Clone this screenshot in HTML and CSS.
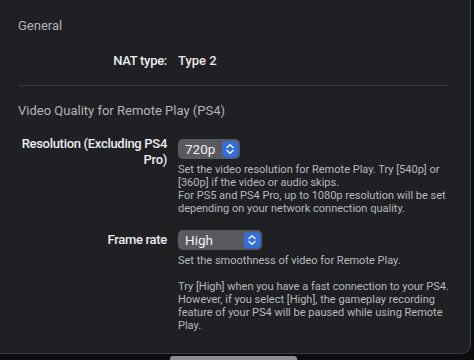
FILE: index.html
```html
<!DOCTYPE html>
<html>
<head>
<meta charset="utf-8">
<link rel="stylesheet" href="styles.css">
</head>
<body>
<div class="screen">
  <div class="panel">
    <div class="section-title first">General</div>
    <div class="row nat">
      <div class="label">NAT type:</div>
      <div class="value">Type 2</div>
    </div>
    <div class="divider"></div>
    <div class="section-title">Video Quality for Remote Play (PS4)</div>
    <div class="row res">
      <div class="label">Resolution (Excluding PS4 Pro)</div>
      <div class="value">
        <div class="popup popup-res"><span>720p</span><span class="stepper"><svg width="10" height="12" viewBox="0 0 10 12"><path d="M2 4.5 L5 1.8 L8 4.5 M2 7.5 L5 10.2 L8 7.5" fill="none" stroke="#fff" stroke-width="1.5" stroke-linecap="round" stroke-linejoin="round"/></svg></span></div>
        <div class="desc">Set the video resolution for Remote Play. Try [540p] or [360p] if the video or audio skips.<br>For PS5 and PS4 Pro, up to 1080p resolution will be set depending on your network connection quality.</div>
      </div>
    </div>
    <div class="row fps">
      <div class="label">Frame rate</div>
      <div class="value">
        <div class="popup popup-fps"><span>High</span><span class="stepper"><svg width="10" height="12" viewBox="0 0 10 12"><path d="M2 4.5 L5 1.8 L8 4.5 M2 7.5 L5 10.2 L8 7.5" fill="none" stroke="#fff" stroke-width="1.5" stroke-linecap="round" stroke-linejoin="round"/></svg></span></div>
        <div class="desc">Set the smoothness of video for Remote Play.<br><br>Try [High] when you have a fast connection to your PS4. However, if you select [High], the gameplay recording feature of your PS4 will be paused while using Remote Play.</div>
      </div>
    </div>
  </div>
  <div class="footer">
    <div class="reg-btn">Registration</div>
  </div>
</div>
</body>
</html>
```
FILE: styles.css
```css
html, body {
  margin: 0;
  padding: 0;
  background: #0d0d0f;
  font-family: "Roboto", "Liberation Sans", sans-serif;
}
.screen {
  width: 474px;
  height: 360px;
  overflow: hidden;
  background: #0d0d0f;
}
.panel {
  width: 471px;
  height: 354px;
  box-sizing: border-box;
  background: #1f2024;
  border-right: 1px solid #3b3c40;
  border-bottom: 1px solid #3b3c40;
  border-bottom-right-radius: 9px;
  padding: 18px 0 0 18px;
  color: #e6e6e6;
}
.section-title {
  font-size: 13px;
  line-height: 16px;
  color: #b4b4b6;
  height: 16px;
}
.row {
  display: grid;
  grid-template-columns: 149px 1fr;
  column-gap: 11px;
}
.label {
  text-align: right;
  font-size: 13px;
  font-weight: 500;
  line-height: 15px;
  letter-spacing: -0.3px;
  color: #ececec;
}
.value {
  font-size: 13px;
  line-height: 15px;
  color: #e6e6e6;
}
.nat {
  margin-top: 19px;
}
.nat .value {
  font-weight: 500;
}
.divider {
  height: 1px;
  background: #393a3e;
  width: 430px;
  margin-top: 17px;
  margin-bottom: 17px;
}
.res {
  margin-top: 20px;
}
.res .label {
  margin-top: -3px;
  line-height: 16px;
}
.popup {
  height: 20px;
  box-sizing: border-box;
  background: #595a5e;
  border-radius: 5px;
  display: flex;
  align-items: center;
  justify-content: space-between;
  padding: 0 2px 0 7px;
  font-size: 13.5px;
  color: #f0f0f0;
}
.popup-res {
  width: 62px;
}
.popup-fps {
  width: 84px;
}
.stepper {
  width: 16px;
  height: 16px;
  border-radius: 4px;
  background: #2f6ee6;
  display: flex;
  align-items: center;
  justify-content: center;
}
.stepper svg {
  display: block;
}
.desc {
  margin-top: 4px;
  font-size: 11px;
  line-height: 13px;
  color: #b9b9bb;
  width: 272px;
}
.fps {
  margin-top: 15px;
}
.fps .label {
  padding-top: 2px;
}
.footer {
  height: 6px;
  position: relative;
}
.reg-btn {
  position: absolute;
  left: 170px;
  top: 2px;
  width: 127px;
  height: 20px;
  background: #8d8d90;
  border-radius: 3px;
  color: #111;
  font-size: 13px;
  font-weight: 700;
  text-align: center;
  line-height: 18px;
  padding-top: 1px;
}
```
